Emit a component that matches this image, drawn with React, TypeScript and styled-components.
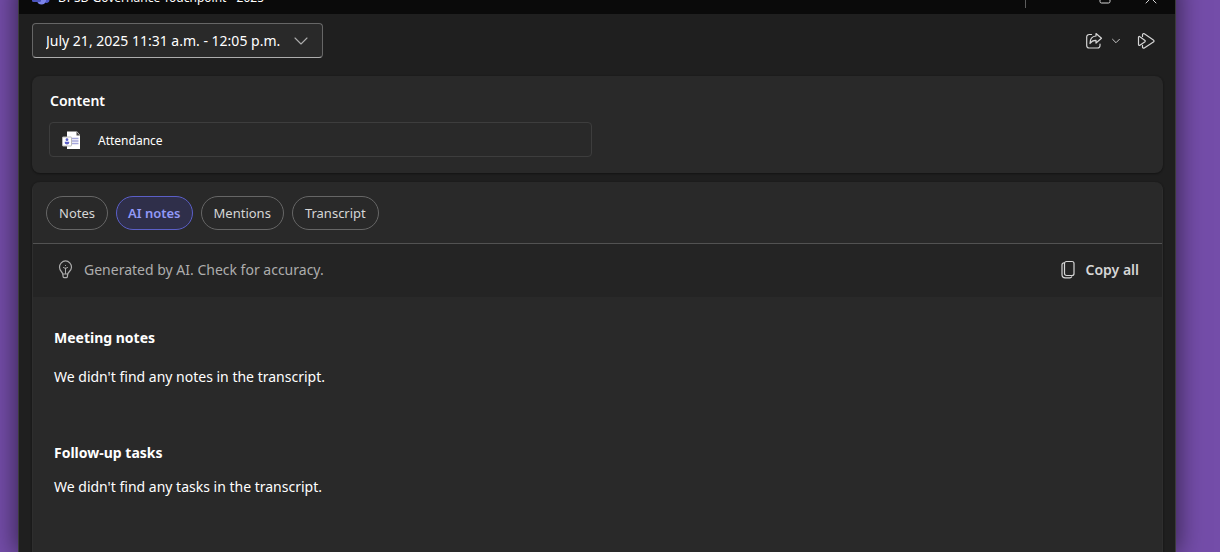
import React, { useState } from "react";
import styled, { createGlobalStyle } from "styled-components";

const GlobalStyle = createGlobalStyle`
  *, *::before, *::after { box-sizing: border-box; }
  html { background: #744da9; }
  body {
    margin: 0;
    height: 100vh;
    overflow: hidden;
    color: #ffffff;
    font-family: "Noto Sans", "Open Sans", sans-serif;
    font-size: 14px;
    line-height: 20px;
  }
  button, select { font: inherit; color: inherit; }
  h2, p { margin: 0; }
`;

const Desktop = styled.div`
  display: flex;
  height: 100vh;
  padding: 0 44px 0 18px;
  overflow: hidden;
`;

const AppWindow = styled.div`
  flex: 1;
  min-width: 0;
  display: flex;
  flex-direction: column;
  margin-top: -18px;
  background: #1f1f1f;
  border: solid #3b3b3b;
  border-width: 0 1px;
  box-shadow: 0 0 24px 2px rgba(0, 0, 0, 0.55);
`;

const TitleBar = styled.header`
  flex: none;
  display: flex;
  align-items: center;
  justify-content: space-between;
  height: 32px;
  padding: 0 1px 0 13px;
  background: #0a0a0a;
  font-size: 12px;
`;

const TitleGroup = styled.div`
  display: flex;
  align-items: center;
  gap: 8px;
`;

const WindowControls = styled.div`
  display: flex;
  align-items: center;
`;

const Separator = styled.span`
  width: 1px;
  height: 20px;
  margin-right: 24px;
  background: #5c5c5c;
`;

const IconButton = styled.button<{ $width: number }>`
  display: grid;
  place-items: center;
  width: ${(p) => p.$width}px;
  height: 24px;
  padding: 0;
  border: 0;
  background: none;
  color: #d6d6d6;
`;

const Toolbar = styled.div`
  flex: none;
  display: flex;
  align-items: center;
  justify-content: space-between;
  padding: 9px 11px 18px 13px;
`;

const SessionPicker = styled.label`
  display: grid;
  align-items: center;
  width: 291px;
  & > * { grid-area: 1 / 1; }
  & > svg {
    justify-self: end;
    margin-right: 15px;
    color: #adadad;
    pointer-events: none;
  }
`;

const SessionSelect = styled.select`
  appearance: none;
  width: 100%;
  height: 35px;
  padding: 0 34px 0 13px;
  border: 1px solid #666666;
  border-bottom-color: #adadad;
  border-radius: 4px;
  background: #292929;
`;

const Actions = styled.div`
  display: flex;
  align-items: center;
`;

const Panels = styled.main`
  flex: 1;
  display: flex;
  flex-direction: column;
  gap: 9px;
  padding: 0 12px 0 13px;
`;

const Card = styled.section`
  border-radius: 8px;
  background: #292929;
  box-shadow: 0 0 2px rgba(0, 0, 0, 0.24), 0 1px 2px rgba(0, 0, 0, 0.28);
`;

const ContentCard = styled(Card)`
  display: flex;
  flex-direction: column;
  gap: 11px;
  padding: 15px 17px 16px;
`;

const Heading = styled.h2`
  font-size: 14px;
  line-height: 20px;
  font-weight: 600;
`;

const ContentHeading = styled(Heading)`
  padding-left: 1px;
`;

const FileItem = styled.button`
  display: flex;
  align-items: center;
  gap: 16px;
  width: 50%;
  min-width: 240px;
  max-width: 543px;
  height: 35px;
  padding: 2px 12px 0;
  border: 1px solid #3d3d3d;
  border-radius: 4px;
  background: none;
  font-size: 12px;
`;

const NotesCard = styled(Card)`
  flex: 1;
  border: solid #2e2e2e;
  border-width: 0 1px;
  border-radius: 8px 8px 0 0;
`;

const Tabs = styled.div`
  display: flex;
  gap: 8px;
  padding: 14px 13px 13px;
  border-bottom: 1px solid #525252;
`;

const Tab = styled.button<{ $active: boolean }>`
  height: 34px;
  padding: 0 ${(p) => (p.$active ? 11 : 12)}px;
  border: 1px solid ${(p) => (p.$active ? "#5b5fc7" : "#666666")};
  border-radius: 17px;
  background: ${(p) => (p.$active ? "#2f2f4a" : "transparent")};
  color: ${(p) => (p.$active ? "#9299f7" : "#d6d6d6")};
  font-size: 13px;
  font-weight: ${(p) => (p.$active ? 600 : 400)};
`;

const Notice = styled.div`
  display: flex;
  align-items: center;
  justify-content: space-between;
  padding: 16px 23px 17px 23px;
  background: #242424;
`;

const NoticeText = styled.div`
  display: flex;
  align-items: center;
  gap: 10px;
  color: #adadad;
`;

const CopyButton = styled.button`
  display: flex;
  align-items: center;
  gap: 10px;
  padding: 0;
  border: 0;
  background: none;
  color: #d6d6d6;
  font-weight: 600;
`;

const Notes = styled.div`
  display: flex;
  flex-direction: column;
  gap: 56px;
  padding: 31px 21px;
`;

const NoteBlock = styled.section<{ $gap: number }>`
  display: flex;
  flex-direction: column;
  gap: ${(p) => p.$gap}px;
`;

const NoteHeading = styled(Heading)`
  font-weight: 700;
`;

const stroke = {
  fill: "none",
  stroke: "currentColor",
  strokeLinecap: "round" as const,
  strokeLinejoin: "round" as const,
  "aria-hidden": true,
};

const TeamsIcon = () => (
  <svg width="18" height="18" viewBox="0 0 18 18" aria-hidden="true">
    <circle cx="9.500" cy="3" r="2.500" fill="#7b83eb" />
    <circle cx="15" cy="4" r="2" fill="#5059c9" />
    <path d="M12 6.500h5.500v4a3 3 0 0 1-5.500 2z" fill="#5059c9" />
    <path d="M5 6.500h9v5a4.500 4 0 0 1-9 0z" fill="#7b83eb" />
    <rect x="0" y="4" width="9" height="9" rx="1.500" fill="#4b53bc" />
    <path d="M2.500 6.500h4M4.500 6.500v4.500" stroke="#fff" strokeWidth="1.200" />
  </svg>
);

const Chevron = ({ size }: { size: number }) => (
  <svg width={size} height={size} viewBox="0 0 14 14" {...stroke}>
    <path d="M1 4l6 6 6-6" strokeWidth={size > 10 ? 1.1 : 1.6} />
  </svg>
);

const ShareIcon = () => (
  <svg width="18" height="18" viewBox="0 0 18 18" {...stroke}>
    <path d="M6.500 2.500H4.200A2.500 2.500 0 0 0 1.700 5v8.500A2.500 2.500 0 0 0 4.200 16h8.300a2.500 2.500 0 0 0 2.500-2.500V12" strokeWidth="1.200" />
    <path d="M11 1.500l5.500 4.700L11 11V8.300C8.500 8.200 6.600 9 5 11.500 5 7 7.500 4.200 11 4z" strokeWidth="1.200" />
  </svg>
);

const PlayIcon = () => (
  <svg width="18" height="18" viewBox="0 0 18 18" {...stroke}>
    <path d="M5.500 4.500V2.800c0-.9 1-1.500 1.800-1L16.400 7.900a1.200 1.200 0 0 1 0 2.100l-9.100 6c-.8.500-1.800-.1-1.800-1V13.300" strokeWidth="1.200" />
    <path d="M1.500 5.300c0-.7.800-1.100 1.400-.6L8 8.500a.8.800 0 0 1 0 1.200l-5.100 3.600c-.6.400-1.400 0-1.400-.7z" strokeWidth="1.200" />
  </svg>
);

const AttendanceIcon = () => (
  <svg width="20" height="20" viewBox="0 0 20 20" aria-hidden="true">
    <path d="M5 0.500h10l3 3.500V18H5z" fill="#ffffff" />
    <path d="M14.500 0.500v4H18z" fill="#484644" />
    <path d="M10 7.500h6.500M10 10h6.500M10 12.500h6.500" stroke="#a6a7dc" strokeWidth="1.300" />
    <rect x="0.500" y="6" width="9" height="9" rx="0.500" fill="#ffffff" stroke="#b9b9b9" />
    <circle cx="5" cy="8.700" r="1.400" fill="#5b5fc7" />
    <path d="M2.800 10.800h4.400v1a2.200 1.700 0 0 1-4.400 0z" fill="#5b5fc7" />
  </svg>
);

const BulbIcon = () => (
  <svg width="18" height="20" viewBox="0 0 18 20" {...stroke}>
    <path d="M6.800 14C6.500 12 3.500 10.800 3.500 7.300a5.500 5.800 0 0 1 12 0c0 3.500-3.500 4.700-3.800 6.700z" strokeWidth="1.200" />
    <path d="M6.800 14l.3 2.600a1.200 1.200 0 0 0 1.200 1h1.900a1.200 1.200 0 0 0 1.200-1l.3-2.600" strokeWidth="1.200" />
    <path d="M9.500 8v5.500M7.500 7.500l2 1 2-1M9.500 5.500v.1" strokeWidth="1" />
  </svg>
);

const CopyIcon = () => (
  <svg width="16" height="20" viewBox="0 0 16 20" {...stroke}>
    <rect x="4.500" y="1.500" width="9.500" height="14" rx="2" strokeWidth="1.200" />
    <path d="M4 2.800A2 2 0 0 0 2 4.800v9.700a3.300 3.300 0 0 0 3.300 3.300H10a2 2 0 0 0 1.700-1" strokeWidth="1.200" />
  </svg>
);

const tabs = ["Notes", "AI notes", "Mentions", "Transcript"];

const notes = [
  { title: "Meeting notes", text: "We didn't find any notes in the transcript.", gap: 19 },
  { title: "Follow-up tasks", text: "We didn't find any tasks in the transcript.", gap: 14 },
];

export default function App() {
  const [active, setActive] = useState("AI notes");

  return (
    <>
      <GlobalStyle />
      <Desktop>
        <AppWindow>
          <TitleBar>
            <TitleGroup>
              <TeamsIcon />
              <span>DPSD Governance Touchpoint - 2025</span>
            </TitleGroup>
            <WindowControls>
              <Separator />
              <IconButton $width={32} aria-label="Minimize">
                <svg width="12" height="12" viewBox="0 0 12 12" {...stroke}>
                  <path d="M1 6h10" />
                </svg>
              </IconButton>
              <IconButton $width={46} aria-label="Maximize">
                <svg width="12" height="12" viewBox="0 0 12 12" {...stroke}>
                  <rect x="1" y="1" width="10" height="10" rx="1.500" />
                </svg>
              </IconButton>
              <IconButton $width={46} aria-label="Close">
                <svg width="12" height="12" viewBox="0 0 12 12" {...stroke}>
                  <path d="M1 1l10 10M11 1L1 11" />
                </svg>
              </IconButton>
            </WindowControls>
          </TitleBar>

          <Toolbar>
            <SessionPicker>
              <SessionSelect aria-label="Meeting session">
                <option>July 21, 2025 11:31 a.m. - 12:05 p.m.</option>
              </SessionSelect>
              <Chevron size={14} />
            </SessionPicker>
            <Actions>
              <IconButton $width={20} aria-label="Share">
                <ShareIcon />
              </IconButton>
              <IconButton $width={24} aria-label="Share options">
                <Chevron size={8} />
              </IconButton>
              <IconButton $width={36} aria-label="Play recap">
                <PlayIcon />
              </IconButton>
            </Actions>
          </Toolbar>

          <Panels>
            <ContentCard>
              <ContentHeading>Content</ContentHeading>
              <FileItem>
                <AttendanceIcon />
                Attendance
              </FileItem>
            </ContentCard>

            <NotesCard>
              <Tabs role="tablist">
                {tabs.map((tab) => (
                  <Tab
                    key={tab}
                    role="tab"
                    aria-selected={tab === active}
                    $active={tab === active}
                    onClick={() => setActive(tab)}
                  >
                    {tab}
                  </Tab>
                ))}
              </Tabs>
              <Notice>
                <NoticeText>
                  <BulbIcon />
                  <span>Generated by AI. Check for accuracy.</span>
                </NoticeText>
                <CopyButton>
                  <CopyIcon />
                  Copy all
                </CopyButton>
              </Notice>
              <Notes>
                {notes.map((note) => (
                  <NoteBlock key={note.title} $gap={note.gap}>
                    <NoteHeading>{note.title}</NoteHeading>
                    <p>{note.text}</p>
                  </NoteBlock>
                ))}
              </Notes>
            </NotesCard>
          </Panels>
        </AppWindow>
      </Desktop>
    </>
  );
}
